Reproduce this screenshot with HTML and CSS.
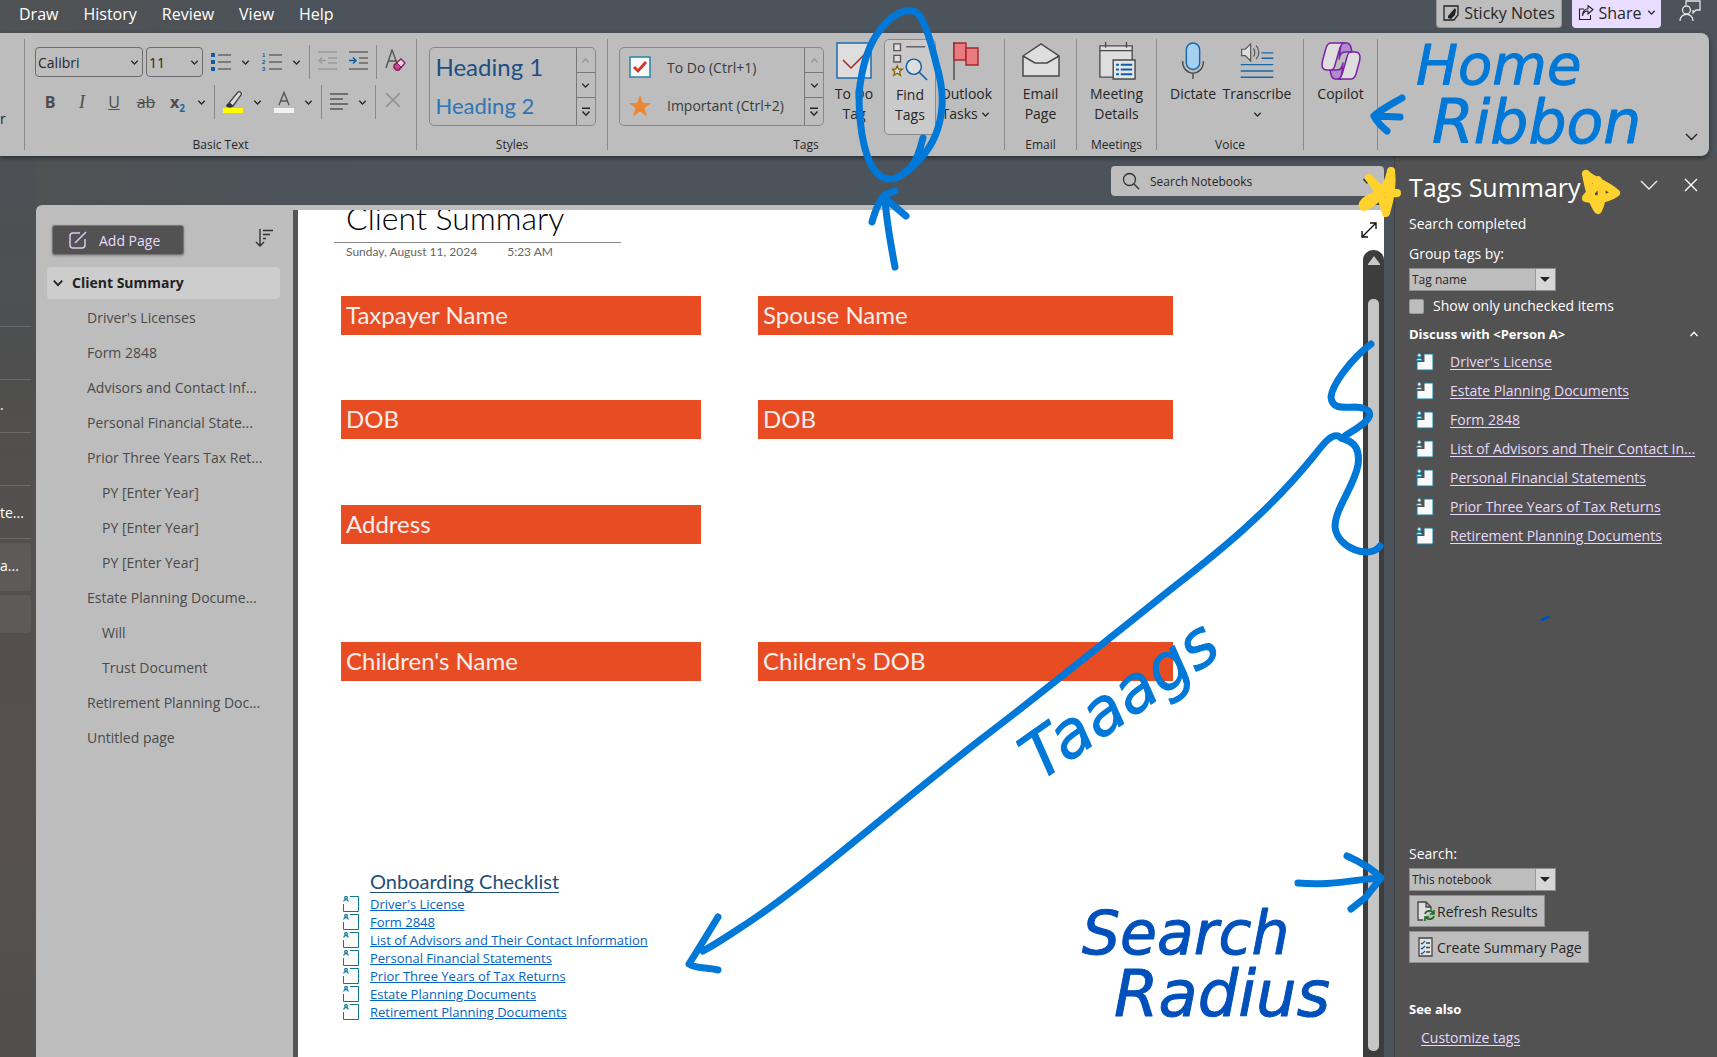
FILE: index.html
```html
<!DOCTYPE html>
<html lang="en">

<head>
    <meta charset="UTF-8">
    <meta name="viewport" content="width=device-width, initial-scale=1.0">
    <title>Client Summary - OneNote</title>
    <link rel="stylesheet" href="styles.css">
</head>

<body>
    <!-- shared icons -->
    <svg class="sprite" aria-hidden="true">
        <symbol id="chev" viewBox="0 0 10 10"><path d="M1.5 3 5 6.8 8.5 3" fill="none" stroke="currentColor" stroke-width="1.5"/></symbol>
        <symbol id="up" viewBox="0 0 10 10"><path d="M1.5 7 5 3.2 8.5 7" fill="none" stroke="currentColor" stroke-width="1.3"/></symbol>
        <symbol id="more" viewBox="0 0 10 10"><path d="M1 1.2h8M1.5 4.5 5 8.3 8.5 4.5" fill="none" stroke="currentColor" stroke-width="1.4"/></symbol>
        <symbol id="close" viewBox="0 0 16 16"><path d="M2 2l12 12M14 2 2 14" fill="none" stroke="currentColor" stroke-width="1.4"/></symbol>
        <symbol id="tag" viewBox="0 0 18 18">
            <path d="M1 9h7.500V1H17v16H1z" fill="#fafafa"/>
            <path d="M1 9v8h16V1H8" fill="none" stroke="#0f7fa5"/>
            <path d="M.5 7.500C.5 4.800 6 4.800 6 7.500z" fill="#fff" stroke="#2a94b8"/>
            <circle cx="3.300" cy="2.300" r="1.700" fill="#fff" stroke="#2a94b8"/>
        </symbol>
        <symbol id="pagetag" viewBox="0 0 16 16">
            <path d="M.5 8v7.500h15V.5H7" fill="#fafafa" stroke="#0f7593"/>
            <path d="M.7 5.500C1 3 5 3 5.300 5.500" fill="none" stroke="#0f7593" stroke-width="1.300"/>
            <circle cx="3" cy="1.800" r="1.300" fill="none" stroke="#0f7593" stroke-width="1.200"/>
        </symbol>
    </svg>

    <header class="menubar">
        <nav class="menus">
            <button>Draw</button>
            <button>History</button>
            <button>Review</button>
            <button>View</button>
            <button>Help</button>
        </nav>
        <button class="sticky">
            <svg width="16" height="16" viewBox="0 0 16 16"><path d="M1 1h14v9l-4 5H1z" fill="none" stroke="#222" stroke-width="1.300"/><path d="M5 11 12 3l1 2-1 5-4 4-3-1z" fill="#222"/></svg>
            Sticky Notes
        </button>
        <button class="share">
            <svg width="16" height="16" viewBox="0 0 16 16"><path d="M6 4H1.500v10.500h11V10M4.500 11C5 7.500 7 6 10 6v3l5-4.500L10 .7v3C6.500 4 4.500 7 4.500 11z" fill="none" stroke="#222" stroke-width="1.100"/></svg>
            Share
            <svg width="9" height="9"><use href="#chev"/></svg>
        </button>
        <button class="account" aria-label="Feedback">
            <svg width="22" height="22" viewBox="0 0 22 22"><path d="M7 5V1h14v9h-4l-3 3v-3M1 21c0-9 13-9 13 0" fill="none" stroke="#e4e4e4" stroke-width="1.300"/><circle cx="7.500" cy="10" r="4" fill="none" stroke="#e4e4e4" stroke-width="1.300"/></svg>
        </button>
    </header>

    <div class="ribbon">
        <section class="group cut">r</section>
        <section class="group basic">
            <div class="tools">
                <div class="row">
                    <span class="combo font"><select aria-label="Font"><option>Calibri</option></select><svg width="9" height="9"><use href="#chev"/></svg></span>
                    <span class="combo size"><select aria-label="Font size"><option>11</option></select><svg width="9" height="9"><use href="#chev"/></svg></span>
                    <button class="split" aria-label="Bullets">
                        <svg width="20" height="20" viewBox="0 0 20 20"><path d="M0 1h4v4H0zM0 8h4v4H0zM0 15h4v4H0z" fill="#0a5fa8"/><path d="M7 3h13M7 10h13M7 17h13" stroke="#666" stroke-width="1.500"/></svg>
                        <svg width="9" height="9"><use href="#chev"/></svg>
                    </button>
                    <button class="split" aria-label="Numbering">
                        <svg class="nums" width="20" height="20" viewBox="0 0 20 20"><path d="M7 3h13M7 10h13M7 17h13" stroke="#666" stroke-width="1.500"/><text x="0" y="5">1</text><text x="0" y="12">2</text><text x="0" y="19">3</text></svg>
                        <svg width="9" height="9"><use href="#chev"/></svg>
                    </button>
                    <i class="bar"></i>
                    <button aria-label="Outdent"><svg width="19" height="19" viewBox="0 0 19 19"><path d="M0 1h19M10 7h9M10 12h9M0 18h19M8 9.500H1M4 6.500 1 9.500l3 3" fill="none" stroke="#999" stroke-width="1.300"/></svg></button>
                    <button aria-label="Indent"><svg width="19" height="19" viewBox="0 0 19 19"><path d="M0 1h19M10 7h9M10 12h9M0 18h19" stroke="#666" stroke-width="1.500"/><path d="M0 9.500h7M4 6.500l3 3-3 3" fill="none" stroke="#0a5fa8" stroke-width="1.500"/></svg></button>
                    <i class="bar"></i>
                    <button aria-label="Clear formatting"><svg width="22" height="22" viewBox="0 0 22 22"><path d="M1 19 7 1l5 13M3.500 12h7" fill="none" stroke="#555" stroke-width="1.400"/><path d="M9 16l7-6 4 4-6 7h-3l-2-2z" fill="#ddd" stroke="#8d1a5c" stroke-width="1.300"/><path d="M9 17l3-3 4 4-3 3h-2z" fill="#c04a90" stroke="#8d1a5c"/></svg></button>
                </div>
                <div class="row letters">
                    <button class="b">B</button>
                    <button class="i">I</button>
                    <button class="u">U</button>
                    <button class="s">ab</button>
                    <button class="b split"><span>x<sub>2</sub></span><svg width="9" height="9"><use href="#chev"/></svg></button>
                    <i class="bar"></i>
                    <button class="split" aria-label="Highlight">
                        <svg width="20" height="22" viewBox="0 0 20 22"><path d="M6 12 15 1c2-1 4 1 3 3l-8 11z" fill="#ddd" stroke="#444" stroke-width="1.300"/><path d="M3 15c1-3 3-3 4-3l3 3c-1 2-5 2-7 0z" fill="#333"/><path d="M0 17h20v5H0z" fill="#ff0"/></svg>
                        <svg width="9" height="9"><use href="#chev"/></svg>
                    </button>
                    <button class="split" aria-label="Font color">
                        <svg width="20" height="22" viewBox="0 0 20 22"><path d="M5 14 10 1.500 15 14M7 10h6" fill="none" stroke="#555" stroke-width="1.400"/><path d="M0 17h20v5H0z" fill="#f2f2f2"/></svg>
                        <svg width="9" height="9"><use href="#chev"/></svg>
                    </button>
                    <i class="bar"></i>
                    <button class="split" aria-label="Align">
                        <svg width="18" height="18" viewBox="0 0 18 18"><path d="M0 1h18M0 6h13M0 11h18M0 16h13" stroke="#555" stroke-width="1.500"/></svg>
                        <svg width="9" height="9"><use href="#chev"/></svg>
                    </button>
                    <i class="bar"></i>
                    <button class="off" aria-label="Delete"><svg width="18" height="18"><use href="#close"/></svg></button>
                </div>
            </div>
            <h2>Basic Text</h2>
        </section>
        <section class="group styles">
            <div class="gallery">
                <div class="choices">
                    <button class="h1">Heading 1</button>
                    <button class="h2">Heading 2</button>
                </div>
                <div class="spin">
                    <button class="off" aria-label="Up"><svg width="9" height="9"><use href="#up"/></svg></button>
                    <button aria-label="Down"><svg width="9" height="9"><use href="#chev"/></svg></button>
                    <button aria-label="More"><svg width="10" height="10"><use href="#more"/></svg></button>
                </div>
            </div>
            <h2>Styles</h2>
        </section>
        <section class="group tags">
            <div class="tools">
                <div class="gallery">
                    <div class="choices">
                        <button><svg width="22" height="22" viewBox="0 0 22 22"><path d="M1 1h20v20H1z" fill="#fafafa" stroke="#2a83a8" stroke-width="1.500"/><path d="M5 11l4 4 8-9" fill="none" stroke="#d13428" stroke-width="2.800"/></svg>To Do (Ctrl+1)</button>
                        <button><svg width="22" height="22" viewBox="0 0 22 22"><path d="M11 0l2.800 8H22l-6.500 5 2.500 8.500-7-5-7 5L6.500 13 0 8h8.200z" fill="#ed8733"/></svg>Important (Ctrl+2)</button>
                    </div>
                    <div class="spin">
                        <button class="off" aria-label="Up"><svg width="9" height="9"><use href="#up"/></svg></button>
                        <button aria-label="Down"><svg width="9" height="9"><use href="#chev"/></svg></button>
                        <button aria-label="More"><svg width="10" height="10"><use href="#more"/></svg></button>
                    </div>
                </div>
                <button class="big">
                    <svg width="36" height="38" viewBox="0 0 36 38"><path d="M1 1h34v35H1z" fill="#dedede" stroke="#1f6cb0" stroke-width="1.500"/><path d="M7 18l8 8 14-14" fill="none" stroke="#a4262c" stroke-width="1.500"/></svg>
                    <span>To Do<br>Tag</span>
                </button>
                <button class="big find">
                    <svg width="36" height="40" viewBox="0 0 36 40"><path d="M1 1h7v7H1zM1 13h7v7H1z" fill="#ddd" stroke="#555" stroke-width="1.400"/><path d="M14 4h20" stroke="#555" stroke-width="1.400"/><path d="M4.500 24l1.500 3.500h4L7 30l1 4-3.500-2.200L1 34l1-4-3-2.500h4z" fill="#ddd" stroke="#8a6100" stroke-width="1.300"/><circle cx="22" cy="25" r="8" fill="#dedede" stroke="#0f5ca8" stroke-width="1.500"/><path d="M28 31l8 8" stroke="#0f5ca8" stroke-width="1.700"/></svg>
                    <span>Find<br>Tags</span>
                </button>
                <button class="big">
                    <svg width="26" height="38" viewBox="0 0 26 38"><path d="M1 0v38" stroke="#555" stroke-width="1.500"/><path d="M1 1h12v17H1z" fill="#e87b80" stroke="#a4262c" stroke-width="1.400"/><path d="M13 6h12v17H13z" fill="#e87b80" stroke="#a4262c" stroke-width="1.400"/></svg>
                    <span>Outlook<br>Tasks <svg width="9" height="9"><use href="#chev"/></svg></span>
                </button>
            </div>
            <h2>Tags</h2>
        </section>
        <section class="group email">
            <button class="big">
                <svg width="38" height="38" viewBox="0 0 38 38"><path d="M1 14 19 2l18 12v20H1z" fill="#dedede" stroke="#4a4a4a" stroke-width="1.500"/><path d="M1 14l12 7h12l12-7" fill="none" stroke="#4a4a4a" stroke-width="1.500"/></svg>
                <span>Email<br>Page</span>
            </button>
            <h2>Email</h2>
        </section>
        <section class="group meetings">
            <button class="big">
                <svg width="38" height="40" viewBox="0 0 38 40"><path d="M1 4h34v33H1z" fill="#dedede" stroke="#4a4a4a" stroke-width="1.400"/><path d="M1 9h34M7 0v6M29 0v6" stroke="#4a4a4a" stroke-width="1.400"/><path d="M15 19h23v20H15z" fill="#e6e6e6" stroke="#4a4a4a" stroke-width="1.500"/><path d="M18 24h3M18 29h3M18 34h3M23 24h12M23 29h12M23 34h12" stroke="#0a5fa8" stroke-width="2"/></svg>
                <span>Meeting<br>Details</span>
            </button>
            <h2>Meetings</h2>
        </section>
        <section class="group voice">
            <div class="tools">
                <button class="big">
                    <svg width="24" height="40" viewBox="0 0 24 40"><rect x="5" y="1" width="14" height="28" rx="7" fill="#a6d0f0" stroke="#1a66a8" stroke-width="1.500"/><path d="M1 20c0 17 22 17 22 0M12 33v6" fill="none" stroke="#4a4a4a" stroke-width="1.500"/></svg>
                    <span>Dictate</span>
                </button>
                <button class="big">
                    <svg width="36" height="42" viewBox="0 0 36 42"><path d="M1 8h4l6-6v19l-6-6H1z" fill="#dedede" stroke="#555" stroke-width="1.300"/><path d="M14 7c2 2 2 7 0 9M17 4c4 4 4 11 0 15" fill="none" stroke="#555" stroke-width="1.300"/><path d="M23 12h13M23 18h13M0 25h36M0 32h36M0 39h36" stroke="#1a66a8" stroke-width="1.600"/></svg>
                    <span>Transcribe<br><svg width="9" height="9"><use href="#chev"/></svg></span>
                </button>
            </div>
            <h2>Voice</h2>
        </section>
        <section class="group copilot">
            <button class="big">
                <svg width="40" height="38" viewBox="0 0 40 38"><g stroke="#7a22a5" stroke-width="1.500" stroke-linejoin="round"><path d="M20 1h6c3 0 4 3 5 9h-7c-4 0-5 3-6 7z" fill="#b38ad0"/><path d="M20 37h-6c-3 0-4-3-5-9h7c4 0 5-3 6-7z" fill="#b38ad0"/><path d="M10 1h13c-3 0-4 4-5 8l-4 14c-1 4-2 5-5 5H6c-5 0-6-4-4-11L5 6c1-3 2-5 5-5z" fill="#dedede"/><path d="M30 37H17c3 0 4-4 5-8l4-14c1-4 2-5 5-5h3c5 0 6 4 4 11l-3 11c-1 3-2 5-5 5z" fill="#dedede"/></g></svg>
                <span>Copilot</span>
            </button>
        </section>
        <button class="collapse" aria-label="Collapse ribbon"><svg width="15" height="15" viewBox="0 0 15 15"><path d="M2 5l5.500 5.500L13 5" fill="none" stroke="#222" stroke-width="1.400"/></svg></button>
    </div>

    <div class="workspace">
        <aside class="sections">
            <p></p>
            <p></p>
            <p>.</p>
            <p></p>
            <p>te...</p>
            <div class="current">a...</div>
            <div></div>
        </aside>

        <main>
            <label class="search">
                <svg width="18" height="18" viewBox="0 0 18 18"><circle cx="7.500" cy="7.500" r="6" fill="none" stroke="#333" stroke-width="1.300"/><path d="M12 12l5 5" stroke="#333" stroke-width="1.400"/></svg>
                <input type="text" placeholder="Search Notebooks" aria-label="Search Notebooks">
                <svg width="10" height="10"><use href="#chev"/></svg>
            </label>
            <div class="notebook">
                <nav class="pages">
                    <div class="pages-head">
                        <button class="add">
                            <svg width="18" height="18" viewBox="0 0 18 18"><path d="M11 2H4C2 2 1 3 1 5v9c0 2 1 3 3 3h9c2 0 3-1 3-3V8M6 12 17 1" fill="none" stroke="#dcc8f5" stroke-width="1.500"/></svg>
                            Add Page
                        </button>
                        <button class="sort" aria-label="Sort"><svg width="18" height="18" viewBox="0 0 18 18"><path d="M5 0v17M1 13l4 4 4-4M8 1.500h10M8 5.500h7M8 9.500h3" fill="none" stroke="#333" stroke-width="1.400"/></svg></button>
                    </div>
                    <ul>
                        <li class="open"><a href="#"><svg width="12" height="12"><use href="#chev"/></svg>Client Summary</a></li>
                        <li><a href="#">Driver's Licenses</a></li>
                        <li><a href="#">Form 2848</a></li>
                        <li><a href="#">Advisors and Contact Inf...</a></li>
                        <li><a href="#">Personal Financial State...</a></li>
                        <li><a href="#">Prior Three Years Tax Ret...</a></li>
                        <li class="sub"><a href="#">PY [Enter Year]</a></li>
                        <li class="sub"><a href="#">PY [Enter Year]</a></li>
                        <li class="sub"><a href="#">PY [Enter Year]</a></li>
                        <li><a href="#">Estate Planning Docume...</a></li>
                        <li class="sub"><a href="#">Will</a></li>
                        <li class="sub"><a href="#">Trust Document</a></li>
                        <li><a href="#">Retirement Planning Doc...</a></li>
                        <li><a href="#">Untitled page</a></li>
                    </ul>
                </nav>
                <article class="page">
                    <h1>Client Summary</h1>
                    <p class="date"><span>Sunday, August 11, 2024</span><span>5:23 AM</span></p>
                    <div class="fields">
                        <h3>Taxpayer Name</h3>
                        <h3>Spouse Name</h3>
                        <h3>DOB</h3>
                        <h3>DOB</h3>
                        <h3 class="wide">Address</h3>
                        <h3>Children's Name</h3>
                        <h3>Children's DOB</h3>
                    </div>
                    <h4>Onboarding Checklist</h4>
                    <ul class="checklist">
                        <li><svg width="16" height="16"><use href="#pagetag"/></svg><a href="#">Driver's License</a></li>
                        <li><svg width="16" height="16"><use href="#pagetag"/></svg><a href="#">Form 2848</a></li>
                        <li><svg width="16" height="16"><use href="#pagetag"/></svg><a href="#">List of Advisors and Their Contact Information</a></li>
                        <li><svg width="16" height="16"><use href="#pagetag"/></svg><a href="#">Personal Financial Statements</a></li>
                        <li><svg width="16" height="16"><use href="#pagetag"/></svg><a href="#">Prior Three Years of Tax Returns</a></li>
                        <li><svg width="16" height="16"><use href="#pagetag"/></svg><a href="#">Estate Planning Documents</a></li>
                        <li><svg width="16" height="16"><use href="#pagetag"/></svg><a href="#">Retirement Planning Documents</a></li>
                    </ul>
                </article>
                <div class="rail">
                    <button aria-label="Full page view"><svg width="16" height="16" viewBox="0 0 16 16"><path d="M1 15 15 1M9 1h6v6M1 9v6h6" fill="none" stroke="#111" stroke-width="1.400"/></svg></button>
                    <div class="scroll">
                        <svg width="12" height="10" viewBox="0 0 12 10"><path d="M6 0l6 8v1H0V8z" fill="#c8c8c8"/></svg>
                        <div class="thumb"></div>
                    </div>
                </div>
            </div>
        </main>

        <aside class="summary">
            <header>
                <h2>Tags Summary</h2>
                <button aria-label="Options"><svg width="20" height="20" viewBox="0 0 20 20"><path d="M2 6l8 8 8-8" fill="none" stroke="#eee" stroke-width="1.400"/></svg></button>
                <button aria-label="Close"><svg width="16" height="16"><use href="#close"/></svg></button>
            </header>
            <p>Search completed</p>
            <label for="groupby">Group tags by:</label>
            <span class="drop"><select id="groupby"><option>Tag name</option></select></span>
            <label class="check"><input type="checkbox">Show only unchecked items</label>
            <h3>Discuss with &lt;Person A&gt; <svg width="10" height="10"><use href="#up"/></svg></h3>
            <ul>
                <li><svg width="18" height="18"><use href="#tag"/></svg><a href="#">Driver's License</a></li>
                <li><svg width="18" height="18"><use href="#tag"/></svg><a href="#">Estate Planning Documents</a></li>
                <li><svg width="18" height="18"><use href="#tag"/></svg><a href="#">Form 2848</a></li>
                <li><svg width="18" height="18"><use href="#tag"/></svg><a href="#">List of Advisors and Their Contact In...</a></li>
                <li><svg width="18" height="18"><use href="#tag"/></svg><a href="#">Personal Financial Statements</a></li>
                <li><svg width="18" height="18"><use href="#tag"/></svg><a href="#">Prior Three Years of Tax Returns</a></li>
                <li><svg width="18" height="18"><use href="#tag"/></svg><a href="#">Retirement Planning Documents</a></li>
            </ul>
            <div class="bottom">
                <label for="scope">Search:</label>
                <span class="drop"><select id="scope"><option>This notebook</option></select></span>
                <button>
                    <svg width="18" height="20" viewBox="0 0 18 20"><path d="M6 19H1V1h8l5 5v3M9 1v5h5" fill="#dedede" stroke="#444" stroke-width="1.300"/><path d="M8 13c1-4 7-4 8-1M17 9v4h-4M17 15c-1 4-7 4-8 1M8 20v-4h4" fill="none" stroke="#1c6b22" stroke-width="1.600"/></svg>
                    Refresh Results
                </button>
                <button>
                    <svg width="18" height="20" viewBox="0 0 18 20"><path d="M2 1h13v18H2z" fill="#e4e4e4" stroke="#444" stroke-width="1.300"/><path d="M4 6l1 1 3-3M4 11l1 1 3-3M4 16l1 1 3-3" fill="none" stroke="#0a5fa8" stroke-width="1.200"/><path d="M9 6h4M9 10.500h4M9 15h4" stroke="#444" stroke-width="1.300"/></svg>
                    Create Summary Page
                </button>
                <h3>See also</h3>
                <a href="#">Customize tags</a>
            </div>
        </aside>
    </div>

    <!-- pen notes drawn over the window -->
    <svg class="ink">
        <g class="blue">
            <path d="M923 138C920 150 917 160 911 167C900 178 892 182 882 177C865 167 859 130 859 93C862 65 868 45 880 30C892 14 905 8 916 12C924 18 930 38 936 63C944 90 944 108 938 128C932 148 920 160 908 171"/>
            <path d="M895 267C890 240 886 220 885 197M872 222C876 208 880 198 886 194L895 191M886 199 906 216"/>
            <path d="M1402 98C1390 105 1380 110 1374 116L1400 117M1374 116C1377 122 1382 127 1387 131"/>
            <path d="M1371 344C1350 360 1332 385 1331 397C1332 410 1345 407 1355 407C1372 408 1372 415 1366 421C1358 429 1350 432 1342 438"/>
            <path d="M1341 438C1356 442 1360 450 1358 465C1354 487 1335 508 1335 527C1337 548 1370 560 1380 546"/>
            <path d="M1338 436C1330 434 1322 446 1313 457C1262 520 1205 562 1160 598C1080 662 1030 702 980 740C890 810 800 890 740 928C728 936 716 944 703 951M718 917 699 948 689 964C696 969 706 967 718 970"/>
            <path d="M1298 883C1330 886 1350 880 1381 878M1347 856C1365 864 1374 870 1381 878L1365 898 1351 909"/>
            <path class="dot" d="M1542 620 1548 617"/>
            <text x="1416" y="84" font-size="56">Home</text>
            <text x="1432" y="143" font-size="60">Ribbon</text>
            <text x="1040" y="782" font-size="64" transform="rotate(-35 1040 782)">Taaags</text>
        </g>
        <g class="navy">
            <text x="1082" y="954" font-size="60">Search</text>
            <text x="1114" y="1016" font-size="64">Radius</text>
        </g>
        <g class="gold">
            <path d="M1391 171C1388 185 1380 200 1364 207C1358 204 1372 192 1397 193C1390 194 1378 190 1369 178C1378 188 1383 200 1386 213C1390 200 1393 185 1391 171"/>
            <path d="M1586 174C1592 180 1606 184 1616 193C1606 200 1594 200 1586 198C1592 190 1598 186 1598 180C1604 190 1602 202 1598 210C1592 202 1588 185 1586 174"/>
        </g>
    </svg>
</body>

</html>
```
FILE: styles.css
```css
* {
    box-sizing: border-box;
}

body {
    margin: 0;
    height: 100vh;
    overflow: hidden;
    display: flex;
    flex-direction: column;
    font-family: "Open Sans", "Noto Sans", sans-serif;
    font-size: 14px;
    color: #262626;
    background: linear-gradient(90deg, #505152 0, #4b535b 360px, #4d535b 100%);
}

button {
    border: 0;
    padding: 0;
    background: none;
    font: inherit;
    color: inherit;
}

h1, h2, h3, h4, p, ul {
    margin: 0;
    padding: 0;
    font-weight: 400;
}

ul {
    list-style: none;
}

svg {
    flex: none;
}

.sprite {
    position: absolute;
    width: 0;
    height: 0;
}

/* title row */
.menubar {
    display: flex;
    height: 33px;
    padding-right: 16px;
    gap: 10px;
    font-size: 16px;
}

.menus {
    display: flex;
    flex: 1;
    gap: 25px;
    padding: 0 0 6px 19px;
    color: #fff;
}

.sticky, .share {
    display: flex;
    align-items: center;
    justify-content: center;
    gap: 5px;
    height: 28px;
    width: 126px;
    padding-bottom: 2px;
    border: 1px solid #999;
    border-top: 0;
    border-radius: 0 0 4px 4px;
    background: #bdbdbd;
    white-space: nowrap;
}

.share {
    width: 89px;
    background: #e9dcff;
    border-color: #e9dcff;
}

.account {
    height: 26px;
    margin-left: 8px;
}

/* ribbon */
.ribbon {
    display: flex;
    height: 123px;
    margin-right: 8px;
    padding: 6px 0;
    background: #bdbdbd;
    border-radius: 0 8px 8px 0;
    box-shadow: 0 2px 4px #2b2e32;
    z-index: 1;
}

.group {
    display: flex;
    flex-direction: column;
    align-items: center;
    justify-content: space-between;
    flex: none;
    border-right: 1px solid #8a8a8a;
}

.group h2 {
    font-size: 12px;
    line-height: 10px;
}

.cut {
    width: 25px;
    align-items: flex-start;
    justify-content: flex-end;
    padding-bottom: 22px;
}

.basic {
    width: 392px;
}

.styles {
    width: 191px;
}

.tags {
    width: 397px;
}

.email {
    width: 72px;
}

.meetings {
    width: 80px;
}

.voice {
    width: 147px;
}

.copilot {
    width: 74px;
}

.basic .tools {
    display: grid;
    gap: 10px;
    padding-top: 8px;
    width: 100%;
}

.row {
    display: flex;
    align-items: center;
    gap: 8px;
    height: 30px;
    padding-left: 10px;
}

.row button + button {
    margin-left: 4px;
}

.letters {
    padding-left: 15px;
    font-size: 16px;
    color: #4d4d4d;
}

.combo {
    display: flex;
    align-items: center;
    width: 108px;
    height: 30px;
    margin-right: -5px;
    padding-right: 3px;
    border: 1px solid #6e6e6e;
    border-radius: 4px;
}

.size {
    width: 57px;
    margin-right: 0;
}

select {
    appearance: none;
    flex: 1;
    min-width: 0;
    border: 0;
    background: none;
    font: inherit;
    color: inherit;
    padding: 0 2px;
}

.b, .i, .u, .s {
    width: 20px;
}

.split {
    display: flex;
    align-items: center;
    justify-content: space-between;
    gap: 10px;
    width: auto;
}

.split svg:last-child {
    color: #222;
}

.nums {
    font: 700 6px "Liberation Sans", sans-serif;
    fill: #0a5fa8;
    overflow: visible;
}

.bar {
    width: 1px;
    height: 34px;
    background: #8a8a8a;
}

.b {
    font-weight: 700;
}

.i {
    font-family: "Liberation Serif", serif;
    font-style: italic;
    font-size: 18px;
}

.u {
    text-decoration: underline;
}

.s {
    text-decoration: line-through;
}

.b span {
    width: 19px;
    white-space: nowrap;
}

.b sub {
    font-size: 10px;
    line-height: 10px;
    color: #1a66a8;
}

.off {
    color: #8f8f8f;
}

.gallery {
    display: flex;
    width: 167px;
    height: 79px;
    margin-top: 8px;
    border: 1px solid #888;
    border-radius: 5px;
}

.choices {
    flex: 1;
    display: grid;
    grid-template-rows: 1fr 1fr;
}

.choices button {
    display: flex;
    align-items: center;
    gap: 16px;
    padding-left: 9px;
    white-space: nowrap;
    color: #3a3a3a;
}

.choices .h1, .choices .h2 {
    padding-left: 6px;
    padding-bottom: 1px;
    font: 24px Lato, sans-serif;
    color: #1f4e82;
}

.choices .h2 {
    font-size: 22px;
    color: #2e75b5;
}

.spin {
    display: grid;
    grid-template-rows: 25px 25px 1fr;
    width: 19px;
}

.spin button {
    display: grid;
    place-items: center;
    border-left: 1px solid #777;
    border-bottom: 1px solid #777;
}

.spin button:last-child {
    border-bottom: 0;
}

.tags .tools, .voice .tools {
    display: flex;
    align-items: flex-start;
    align-self: stretch;
    padding-left: 11px;
}

.tags .gallery {
    width: 205px;
}

.big {
    display: flex;
    flex-direction: column;
    align-items: center;
    flex: none;
    gap: 4px;
    width: 60px;
    height: 96px;
    padding-top: 3px;
    line-height: 20px;
    white-space: nowrap;
}

.big > svg {
    height: 38px;
}

.find {
    width: 52px;
    border: 1px solid #8a8a8a;
    border-radius: 5px;
    background: #cacaca;
}

.meetings .big, .email .big {
    width: 70px;
}

.voice .tools {
    padding-left: 4px;
}

.voice .big {
    width: 64px;
}

.collapse {
    margin: auto 10px 2px auto;
}

/* area below the ribbon */
.workspace {
    flex: 1;
    display: grid;
    grid-template-columns: 36px 1fr 323px;
    min-height: 0;
}

.sections {
    padding: 118px 5px 0 0;
    background: linear-gradient(#4c5156 0, #4f4f4f 200px, #544f4e 400px, #55504d 700px, #504f4d 100%);
    color: #fff;
    overflow: hidden;
}

.sections p {
    height: 53px;
    padding-top: 5px;
    line-height: 30px;
    border-bottom: 1px solid #6b6b6b;
}

.sections p:nth-child(3) {
    line-height: 40px;
}

.sections p:nth-child(5) {
    padding-top: 12px;
}

.sections div {
    height: 38px;
    margin-top: 4px;
    border-radius: 0 4px 4px 0;
    background: #5d5a59;
}

.sections .current {
    height: 48px;
    line-height: 46px;
}

main {
    display: flex;
    flex-direction: column;
    margin-right: 10px;
    min-width: 0;
}

.search {
    display: flex;
    align-items: center;
    align-self: flex-end;
    width: 273px;
    height: 30px;
    margin: 10px 0 9px;
    padding: 0 12px 0 11px;
    gap: 8px;
    border-radius: 4px;
    background: #bdbdbd;
}

.search input {
    flex: 1;
    min-width: 0;
    border: 0;
    background: none;
    font: 12px "Open Sans", sans-serif;
}

.search input::placeholder {
    color: #262626;
}

.notebook {
    flex: 1;
    display: flex;
    min-height: 0;
    padding-top: 5px;
    background: #bdbdbd;
    border-radius: 6px 0 0 0;
}

.pages {
    width: 262px;
    padding: 15px 13px 0 11px;
    border-right: 5px solid #555;
    color: #4a4a4a;
}

.pages-head {
    display: flex;
    justify-content: space-between;
    align-items: center;
    padding: 0 7px 12px 5px;
}

.add {
    display: flex;
    align-items: center;
    gap: 12px;
    width: 132px;
    height: 30px;
    padding-left: 16px;
    border: 1px solid #777;
    border-radius: 3px;
    background: #525252;
    color: #ead9ff;
    box-shadow: 0 1px 3px #888;
}

.pages li {
    height: 35px;
    line-height: 32px;
    padding-left: 40px;
    white-space: nowrap;
}

.pages .sub {
    padding-left: 55px;
}

.pages a {
    color: inherit;
    text-decoration: none;
}

.pages .open {
    height: 32px;
    margin-bottom: 3px;
    padding-left: 5px;
    border-radius: 4px;
    background: #cdcdcd;
    font-weight: 700;
    color: #222;
}

.open a {
    display: flex;
    align-items: center;
    gap: 8px;
}

.page {
    flex: 1;
    min-width: 0;
    overflow: hidden;
    padding-left: 36px;
    background: #fff;
    font-family: Lato, sans-serif;
}

.page h1 {
    width: 287px;
    height: 33px;
    padding-left: 12px;
    border-bottom: 1px solid #888;
    font-size: 32px;
    font-weight: 300;
    line-height: 16px;
    color: #000;
}

.date {
    display: flex;
    gap: 30px;
    padding-left: 12px;
    font-size: 12px;
    line-height: 18px;
    color: #666;
}

.fields {
    display: grid;
    grid-template-columns: 360px 415px;
    grid-template-rows: 104px 105px 137px 39px;
    column-gap: 57px;
    margin: 35px 0 0 7px;
}

.fields h3 {
    height: 39px;
    padding-left: 5px;
    line-height: 37px;
    font-size: 24px;
    background: #e84c22;
    color: #f6eeee;
}

.fields .wide {
    grid-column: 1 / 3;
    width: 360px;
}

.page h4 {
    width: fit-content;
    margin: 190px 0 2px 36px;
    font-size: 20px;
    line-height: 21px;
    border-bottom: 1px solid #1f4e79;
    color: #1f4e79;
}

.checklist li {
    display: flex;
    align-items: center;
    gap: 11px;
    height: 18px;
    padding-left: 9px;
    font: 13px "Open Sans", sans-serif;
}

.checklist a {
    color: #0563c1;
}

.rail {
    display: flex;
    flex-direction: column;
    align-items: flex-end;
    width: 24px;
    background: #fff;
}

.rail button {
    height: 40px;
    width: 24px;
    padding: 3px 6px 0 0;
}

.scroll {
    flex: 1;
    display: flex;
    flex-direction: column;
    align-items: center;
    width: 21px;
    padding: 6px 0;
    border-radius: 10px 10px 0 0;
    background: #3d3d3d;
}

.thumb {
    flex: 1;
    width: 11px;
    margin-top: 33px;
    border-radius: 5px;
    background: #c6c6c6;
}

/* tags pane */
.summary {
    display: flex;
    flex-direction: column;
    padding: 10px 18px 10px 14px;
    border-left: 1px solid #404040;
    background: #525252;
    color: #fff;
}

.summary header {
    display: flex;
    align-items: center;
    gap: 24px;
    height: 41px;
}

.summary h2 {
    flex: 1;
    font-size: 25px;
}

.summary p {
    line-height: 33px;
}

.summary label {
    line-height: 28px;
}

.drop {
    display: flex;
    width: 147px;
    height: 23px;
    border: 1px solid #8f8f8f;
    background: #bdbdbd;
    color: #262626;
    font-size: 12px;
    position: relative;
}

.drop::after {
    content: "";
    width: 19px;
    border-left: 1px solid #999;
    background: #d6d6d6;
}

.drop::before {
    content: "";
    position: absolute;
    right: 5px;
    top: 8px;
    border: 5px solid transparent;
    border-top-color: #222;
}

.summary .check {
    display: flex;
    align-items: center;
    gap: 9px;
    height: 30px;
}

.check input {
    appearance: none;
    width: 15px;
    height: 15px;
    margin: 0;
    border: 1px solid #999;
    border-radius: 2px;
    background: #bdbdbd;
}

.summary h3 {
    display: flex;
    align-items: center;
    justify-content: space-between;
    height: 26px;
    font-size: 13px;
    font-weight: 700;
}

.summary li {
    display: flex;
    align-items: center;
    gap: 16px;
    height: 29px;
    padding-left: 7px;
    white-space: nowrap;
}

.summary a {
    color: #e6d8fa;
    text-underline-offset: 2px;
}

.bottom {
    display: flex;
    flex-direction: column;
    align-items: flex-start;
    margin-top: auto;
}

.bottom button {
    display: flex;
    align-items: center;
    gap: 2px;
    height: 32px;
    margin-top: 4px;
    padding: 0 6px 0 7px;
    border: 1px solid #8f8f8f;
    background: #bdbdbd;
    color: #262626;
}

.bottom h3 {
    margin-top: 33px;
}

.bottom a {
    margin: 6px 0 0 12px;
}

/* pen */
.ink {
    position: absolute;
    top: 0;
    left: 0;
    width: 100%;
    height: 100%;
    z-index: 2;
    pointer-events: none;
    fill: none;
    stroke-width: 7;
    stroke-linecap: round;
    stroke-linejoin: round;
    font-family: "DejaVu Sans", sans-serif;
    font-style: italic;
}

.blue {
    stroke: #0078d7;
}

.blue .dot {
    stroke: #0050bb;
    stroke-width: 3;
}

.gold {
    stroke: #ffd22e;
    stroke-width: 8;
}

.ink text {
    fill: #0078d7;
    stroke-width: 1;
}

.navy {
    stroke: #0050bb;
}

.ink .navy text {
    fill: #0050bb;
}
```
